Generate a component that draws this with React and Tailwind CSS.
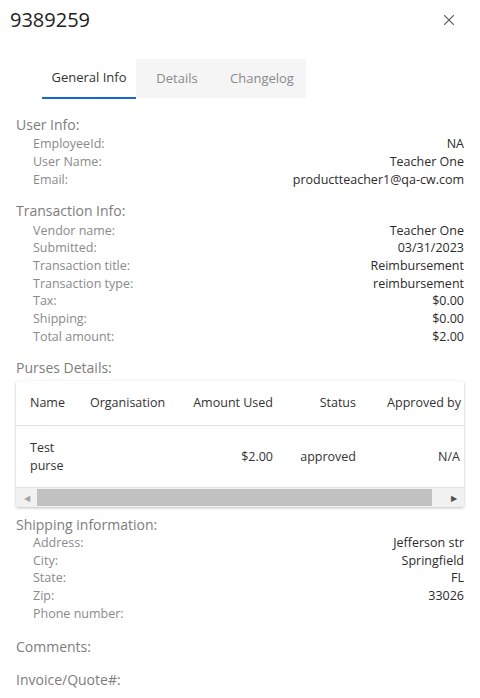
import { X } from "lucide-react";

const userInfo = [
  ["EmployeeId:", "NA"],
  ["User Name:", "Teacher One"],
  ["Email:", "productteacher1@qa-cw.com"],
];

const transactionInfo = [
  ["Vendor name:", "Teacher One"],
  ["Submitted:", "03/31/2023"],
  ["Transaction title:", "Reimbursement"],
  ["Transaction type:", "reimbursement"],
  ["Tax:", "$0.00"],
  ["Shipping:", "$0.00"],
  ["Total amount:", "$2.00"],
];

const shippingInfo = [
  ["Address:", "Jefferson str"],
  ["City:", "Springfield"],
  ["State:", "FL"],
  ["Zip:", "33026"],
  ["Phone number:", ""],
];

const InfoSection = ({ title, rows, gap = "mt-[2px]" }) => (
  <section className="px-4">
    <h3 className="text-[14px] leading-[18px] text-[#7d7d7d]">{title}</h3>
    <div className={`${gap} pl-[17px]`}>
      {rows.map(([label, value]) => (
        <div key={label} className="flex h-[17.7px] items-center justify-between text-[12.5px]">
          <span className="text-[#8a8a8a]">{label}</span>
          <span className="text-[#2b2b2b]">{value}</span>
        </div>
      ))}
    </div>
  </section>
);

const App = () => {
  return (
    <div className="min-h-[698px] w-[480px] bg-white font-['Open_Sans',sans-serif]">
      <header className="flex items-center justify-between pl-[10px] pr-[22px] pt-[6px]">
        <h1 className="text-[20px] leading-[28px] text-[#222]">9389259</h1>
        <X className="h-[18px] w-[18px] text-[#666]" strokeWidth={1.5} />
      </header>

      <nav className="mt-[25px] flex pl-[42px]">
        <button className="h-[40px] w-[94px] border-b-2 border-[#1565e0] text-[13px] text-[#333]">
          General Info
        </button>
        <div className="flex h-[39px] bg-[#f5f5f5]">
          <button className="w-[82px] text-[13px] text-[#8a8a8a]">Details</button>
          <button className="w-[88px] text-[13px] text-[#8a8a8a]">Changelog</button>
        </div>
      </nav>

      <div className="mt-[17px] space-y-[13px]">
        <InfoSection title="User Info:" rows={userInfo} />
        <InfoSection title="Transaction Info:" rows={transactionInfo} />
      </div>

      <section className="mt-[13px] px-4">
        <h3 className="text-[14px] leading-[18px] text-[#7d7d7d]">Purses Details:</h3>
        <div className="mt-[4px] overflow-hidden rounded-[3px] bg-white shadow-[0_1px_3px_rgba(0,0,0,0.25)]">
          <table className="w-full table-fixed text-[12.5px] text-[#333]">
            <colgroup>
              <col className="w-[64px]" />
              <col className="w-[96px]" />
              <col className="w-[107px]" />
              <col className="w-[83px]" />
              <col />
            </colgroup>
            <thead>
              <tr className="h-[45px] border-b border-[#e0e0e0]">
                <th className="pl-[14px] text-left font-normal">Name</th>
                <th className="pl-[10px] text-left font-normal">Organisation</th>
                <th className="pr-[10px] text-right font-normal">Amount Used</th>
                <th className="pr-[10px] text-right font-normal">Status</th>
                <th className="pr-[3px] text-right font-normal whitespace-nowrap">Approved by</th>
              </tr>
            </thead>
            <tbody>
              <tr className="h-[62px] border-b border-[#e0e0e0]">
                <td className="pl-[14px] leading-[18px]">
                  Test
                  <br />
                  purse
                </td>
                <td />
                <td className="pr-[10px] text-right">$2.00</td>
                <td className="pr-[10px] text-right">approved</td>
                <td className="pr-[4px] text-right">N/A</td>
              </tr>
            </tbody>
          </table>
          <div className="flex h-[19px] items-center bg-[#f1f1f1]">
            <span className="flex w-[21px] justify-center text-[8px] text-[#a3a3a3]">◀</span>
            <div className="h-[17px] w-[395px] bg-[#c1c1c1]" />
            <div className="flex-1" />
            <span className="flex w-[21px] justify-center text-[8px] text-[#505050]">▶</span>
          </div>
        </div>
      </section>

      <div className="mt-[9px]">
        <InfoSection title="Shipping information:" rows={shippingInfo} gap="mt-[0px]" />
      </div>

      <section className="mt-[15px] space-y-[15px] px-4">
        <h3 className="text-[14px] leading-[18px] text-[#7d7d7d]">Comments:</h3>
        <h3 className="text-[14px] leading-[18px] text-[#7d7d7d]">Invoice/Quote#:</h3>
      </section>
    </div>
  );
};

export default App;
